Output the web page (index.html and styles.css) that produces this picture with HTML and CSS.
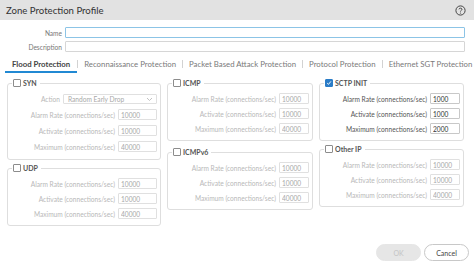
FILE: index.html
```html
<!DOCTYPE html>
<html lang="en">
<head>
    <meta charset="UTF-8">
    <title>Zone Protection Profile</title>
    <link rel="stylesheet" href="styles.css">
</head>
<body>
    <div class="dialog">
        <div class="titlebar">
            <span class="title">Zone Protection Profile</span>
            <svg class="help" width="11" height="11" viewBox="0 0 11 11">
                <circle cx="5.5" cy="5.5" r="4.6" fill="none" stroke="#444" stroke-width="1"/>
                <path d="M4 4.3 C4 2.8 7 2.8 7 4.3 C7 5.3 5.5 5.3 5.5 6.5" fill="none" stroke="#444" stroke-width="1"/>
                <circle cx="5.5" cy="8" r="0.6" fill="#444"/>
            </svg>
        </div>

        <div class="top-form">
            <div class="field">
                <label for="name">Name</label>
                <input type="text" id="name" class="wide focus">
            </div>
            <div class="field">
                <label for="desc">Description</label>
                <input type="text" id="desc" class="wide">
            </div>
        </div>

        <div class="tabs">
            <span class="tab active">Flood Protection</span>
            <span class="sep"></span>
            <span class="tab">Reconnaissance Protection</span>
            <span class="sep"></span>
            <span class="tab">Packet Based Attack Protection</span>
            <span class="sep"></span>
            <span class="tab">Protocol Protection</span>
            <span class="sep"></span>
            <span class="tab">Ethernet SGT Protection</span>
        </div>

        <div class="columns">
            <div class="col col-1">
                <fieldset class="group off syn">
                    <legend><span class="box"></span>SYN</legend>
                    <div class="row first-sel">
                        <label>Action</label>
                        <div class="select">
                            <span>Random Early Drop</span>
                            <svg width="7" height="5" viewBox="0 0 7 5"><path d="M1 1 L3.5 3.5 L6 1" fill="none" stroke="#bbb" stroke-width="0.9"/></svg>
                        </div>
                    </div>
                    <div class="row"><label>Alarm Rate (connections/sec)</label><input type="text" value="10000" disabled></div>
                    <div class="row"><label>Activate (connections/sec)</label><input type="text" value="10000" disabled></div>
                    <div class="row"><label>Maximum (connections/sec)</label><input type="text" value="40000" disabled></div>
                </fieldset>
                <fieldset class="group off">
                    <legend><span class="box"></span>UDP</legend>
                    <div class="row"><label>Alarm Rate (connections/sec)</label><input type="text" value="10000" disabled></div>
                    <div class="row"><label>Activate (connections/sec)</label><input type="text" value="10000" disabled></div>
                    <div class="row"><label>Maximum (connections/sec)</label><input type="text" value="40000" disabled></div>
                </fieldset>
            </div>

            <div class="col col-2">
                <fieldset class="group off">
                    <legend><span class="box"></span>ICMP</legend>
                    <div class="row"><label>Alarm Rate (connections/sec)</label><input type="text" value="10000" disabled></div>
                    <div class="row"><label>Activate (connections/sec)</label><input type="text" value="10000" disabled></div>
                    <div class="row"><label>Maximum (connections/sec)</label><input type="text" value="40000" disabled></div>
                </fieldset>
                <fieldset class="group off">
                    <legend><span class="box"></span>ICMPv6</legend>
                    <div class="row"><label>Alarm Rate (connections/sec)</label><input type="text" value="10000" disabled></div>
                    <div class="row"><label>Activate (connections/sec)</label><input type="text" value="10000" disabled></div>
                    <div class="row"><label>Maximum (connections/sec)</label><input type="text" value="40000" disabled></div>
                </fieldset>
            </div>

            <div class="col col-3">
                <fieldset class="group">
                    <legend>
                        <span class="box checked">
                            <svg width="8" height="8" viewBox="0 0 8 8"><path d="M1.6 4.2 L3.3 5.8 L6.5 1.9" fill="none" stroke="#fff" stroke-width="1.3"/></svg>
                        </span>SCTP INIT
                    </legend>
                    <div class="row"><label>Alarm Rate (connections/sec)</label><input type="text" value="1000"></div>
                    <div class="row"><label>Activate (connections/sec)</label><input type="text" value="1000"></div>
                    <div class="row"><label>Maximum (connections/sec)</label><input type="text" value="2000"></div>
                </fieldset>
                <fieldset class="group off">
                    <legend><span class="box"></span>Other IP</legend>
                    <div class="row"><label>Alarm Rate (connections/sec)</label><input type="text" value="10000" disabled></div>
                    <div class="row"><label>Activate (connections/sec)</label><input type="text" value="10000" disabled></div>
                    <div class="row"><label>Maximum (connections/sec)</label><input type="text" value="40000" disabled></div>
                </fieldset>
            </div>
        </div>

        <div class="footer">
            <button class="btn ok" disabled>OK</button>
            <button class="btn cancel">Cancel</button>
        </div>
    </div>
</body>
</html>
```

FILE: styles.css
```css
body {
    margin: 0;
    background: #ffffff;
    font-family: 'Lato', 'Liberation Sans', sans-serif;
    color: #333;
}
.dialog {
    width: 474px;
    height: 270px;
    display: flex;
    flex-direction: column;
    overflow: hidden;
}
.titlebar {
    height: 20px;
    flex-shrink: 0;
    background: #e2e2e2;
    display: flex;
    align-items: center;
    justify-content: space-between;
    padding: 0 8px 0 6px;
}
.title {
    font-size: 9.6px;
    color: #333;
}
.help {
    display: block;
}
.top-form {
    padding-top: 7px;
    display: flex;
    flex-direction: column;
    gap: 3px;
}
.field {
    display: flex;
    align-items: center;
    height: 11px;
}
.field label {
    width: 65px;
    text-align: right;
    font-size: 6.6px;
    color: #777;
    padding-right: 3px;
    box-sizing: border-box;
}
.wide {
    width: 400px;
    height: 11px;
    box-sizing: border-box;
    border: 1px solid #d6d6d6;
    border-radius: 1px;
    margin: 0;
    padding: 0 3px;
}
.wide.focus {
    border-color: #8cc4e6;
}
.tabs {
    margin-top: 3px;
    padding-left: 5px;
    display: flex;
    align-items: center;
    white-space: nowrap;
    font-size: 7.8px;
    color: #7a7a7a;
}
.tab {
    line-height: 10px;
    padding: 4px 6px 2px;
    border-bottom: 2px solid transparent;
}
.tab.active {
    padding: 4px 7px 2px;
    font-weight: bold;
    color: #444;
    border-bottom-color: #2189d3;
}
.sep {
    width: 1px;
    height: 8px;
    background: #d2d2d2;
    flex-shrink: 0;
}
.columns {
    margin-top: 5px;
    padding-left: 7px;
    display: grid;
    grid-template-columns: 154px 146px 145px;
    column-gap: 6px;
    align-items: start;
}
.col {
    display: flex;
    flex-direction: column;
    gap: 3px;
}
.col-2 {
    gap: 6px;
}
.group {
    margin: 0;
    min-width: 0;
    padding: 0 3px 6px 4px;
    border: 1px solid #dedede;
    border-radius: 3px;
}
.group.syn {
    padding-bottom: 7px;
}
.group legend {
    padding: 0 3px 0 1px;
    height: 10px;
    display: flex;
    align-items: center;
    gap: 2px;
    font-size: 7px;
    font-weight: bold;
    color: #555;
}
.box {
    width: 8px;
    height: 8px;
    box-sizing: border-box;
    border: 1px solid #8c8c8c;
    border-radius: 1px;
    background: #fff;
    display: flex;
    align-items: center;
    justify-content: center;
}
.box.checked {
    background: #2a7cc7;
    border-color: #2a7cc7;
}
.box svg {
    display: block;
}
.row {
    display: flex;
    align-items: center;
    justify-content: flex-end;
    gap: 3px;
    height: 11px;
    margin-top: 4px;
}
.row:first-of-type {
    margin-top: 5px;
}
.syn .row {
    margin-top: 5px;
}
.row.first-sel {
    height: 10px;
    margin-top: 6px;
}
.row label {
    font-size: 6.6px;
    color: #555;
    white-space: nowrap;
}
.row input {
    width: 30px;
    height: 11px;
    box-sizing: border-box;
    margin: 0;
    padding: 0 2px;
    border: 1px solid #c8c8c8;
    border-radius: 1px;
    font-family: inherit;
    font-size: 6.6px;
    color: #333;
    background: #fff;
}
.col-1 .row input {
    width: 39px;
}
.off .row label {
    color: #b8b8b8;
}
.off .row input {
    color: #a8a8a8;
    border-color: #e0e0e0;
}
.select {
    width: 94px;
    height: 10px;
    box-sizing: border-box;
    border: 1px solid #e0e0e0;
    border-radius: 1px;
    display: flex;
    align-items: center;
    justify-content: space-between;
    padding: 0 3px 0 4px;
    font-size: 6.6px;
    color: #a8a8a8;
}
.select svg {
    display: block;
}
.footer {
    margin-top: auto;
    padding: 0 5px 9px 0;
    display: flex;
    justify-content: flex-end;
    gap: 3px;
}
.btn {
    width: 45px;
    height: 17px;
    border-radius: 9px;
    font-family: inherit;
    font-size: 7px;
    padding: 0;
}
.btn.ok {
    background: #e6e6e6;
    border: 1px solid #e6e6e6;
    color: #c4c4c4;
}
.btn.cancel {
    background: #fff;
    border: 1px solid #c8c8c8;
    color: #444;
}
```
